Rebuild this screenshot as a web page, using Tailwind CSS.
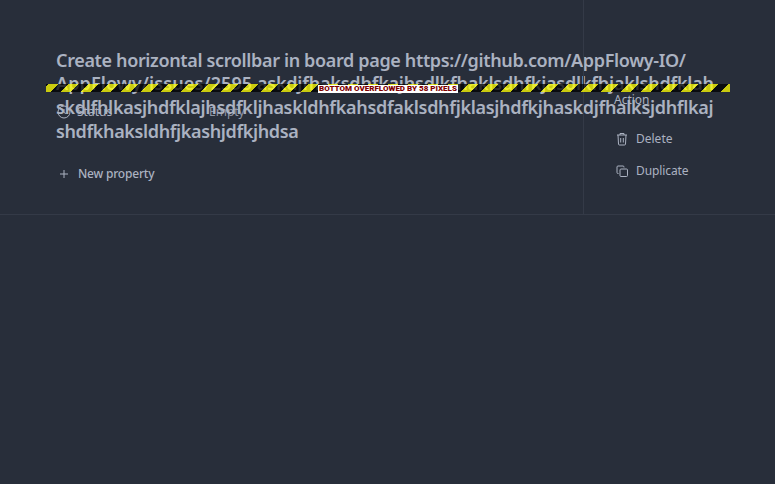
<!DOCTYPE html>
<html>
<head>
<meta charset="utf-8">
<script src="https://cdn.jsdelivr.net/npm/@tailwindcss/browser@4"></script>
</head>
<body class="m-0 h-[484px] w-[775px] overflow-hidden bg-[#282e3a] font-['Noto_Sans',sans-serif] text-[#abb2c1]">
<div class="relative h-[215px] border-b border-[#343a47]">
  <div class="flex h-[214px]">
    <div class="flex w-[583px] flex-col pl-[56px] pt-[48px]">
      <div class="h-[48px] whitespace-nowrap pt-[0.5px] text-[18px] leading-[23.8px] font-semibold">
        <div class="tracking-[-0.355px]">Create horizontal scrollbar in board page https://github.com/AppFlowy-IO/</div>
        <div><span class="tracking-[0.1px]">AppFlowy/issues/2595</span> <span class="tracking-[-0.21px]">askdjfhaksdhfkajhsdlkfhaklsdhfkjasdlkfhjaklshdfklah</span></div>
        <div class="tracking-[-0.31px]">skdlfhlkasjhdfklajhsdfkljhaskldhfkahsdfaklsdhfjklasjhdfkjhaskdjfhalksjdhflkaj</div>
        <div class="tracking-[-0.37px]">shdfkhaksldhfjkashjdfkjhdsa</div>
      </div>
      <div class="flex h-[32px] items-center pl-[1px] text-[12px]">
        <svg class="h-[14px] w-[14px]" viewBox="0 0 14 14" fill="none" stroke="currentColor" stroke-width="1"><circle cx="7" cy="7" r="6"/><path d="M7 4v3.5l2 1"/></svg>
        <span class="ml-[6px] w-[132px]">Status</span>
        <span class="opacity-80">Empty</span>
      </div>
      <div class="mt-[30px] flex h-[32px] items-center pl-[3px] text-[12px] font-medium tracking-[-0.2px]">
        <svg class="h-[10px] w-[10px]" viewBox="0 0 10 10" fill="none" stroke="currentColor" stroke-width="1"><path d="M5 1v8M1 5h8"/></svg>
        <span class="ml-[9px]">New property</span>
      </div>
    </div>
    <div class="flex flex-1 flex-col border-l border-[#343a47] pl-[30px] pt-[92px] text-[12px]">
      <div class="h-[16px] leading-[16px]">Action</div>
      <div class="mt-[15px] flex h-[32px] items-center pl-[2px]">
        <svg class="h-[14px] w-[12px]" viewBox="0 0 12 14" fill="none" stroke="currentColor" stroke-width="1"><path d="M1 3h10M4 3V1.5h4V3M2 3l.5 9a1 1 0 0 0 1 1h5a1 1 0 0 0 1-1L10 3M4.7 6v4.5M7.3 6v4.5"/></svg>
        <span class="ml-[8px]">Delete</span>
      </div>
      <div class="flex h-[32px] items-center pl-[2px]">
        <svg class="h-[14px] w-[12px]" viewBox="0 0 12 14" fill="none" stroke="currentColor" stroke-width="1"><rect x="4" y="5" width="7.5" height="7.5" rx="1"/><path d="M2.5 9.5H2a1 1 0 0 1-1-1V3a1 1 0 0 1 1-1h5a1 1 0 0 1 1 1v.5"/></svg>
        <span class="ml-[8px] tracking-[-0.1px]">Duplicate</span>
      </div>
    </div>
  </div>
  <div class="absolute left-[46px] top-[84px] flex h-[8px] w-[684px] justify-center bg-[repeating-linear-gradient(135deg,rgba(0,0,0,0.75)_0,rgba(0,0,0,0.75)_2px,rgba(255,255,0,0.75)_2px,rgba(255,255,0,0.75)_9.07px,rgba(0,0,0,0.75)_9.07px,rgba(0,0,0,0.75)_14.14px)]">
    <div class="mt-[1px] h-[8px] w-[140px] bg-white text-center font-['Roboto',sans-serif] text-[8px] leading-[8px] font-black whitespace-nowrap text-[#800000]">BOTTOM OVERFLOWED BY 58 PIXELS</div>
  </div>
</div>
</body>
</html>
